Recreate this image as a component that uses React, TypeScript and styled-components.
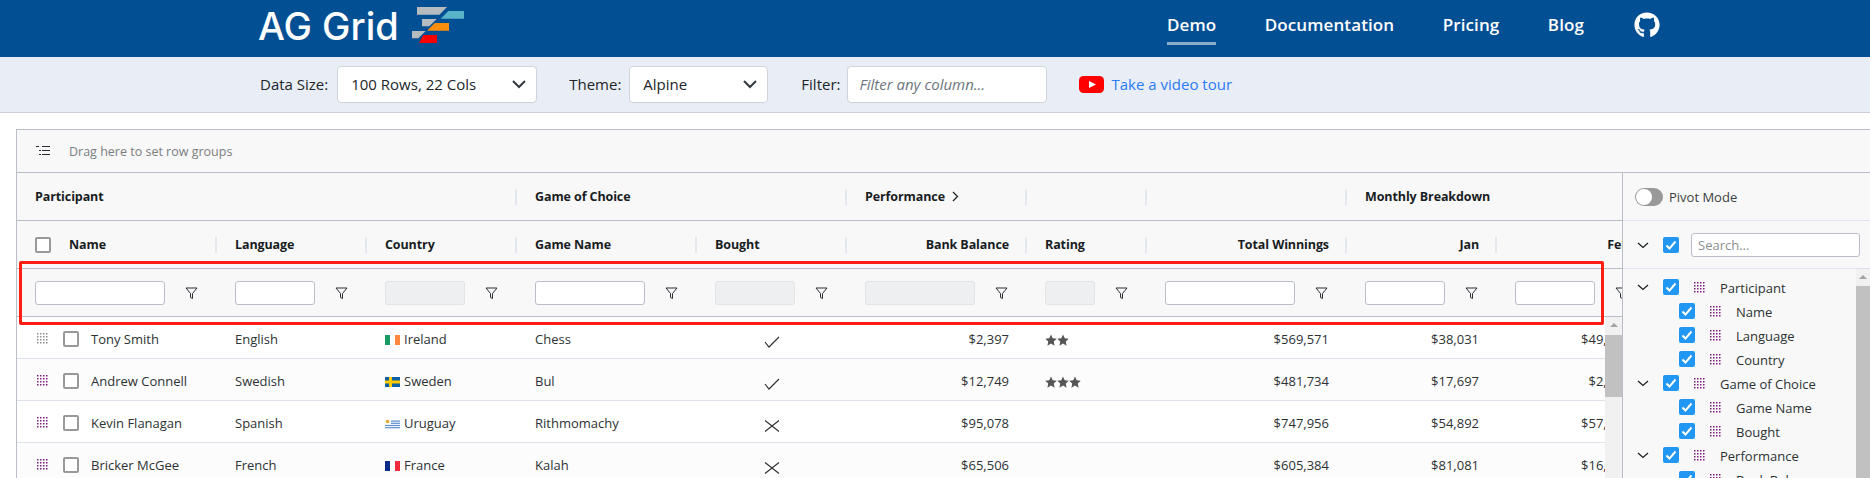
import React from 'react';
import styled, { createGlobalStyle } from 'styled-components';
import { FaGithub } from 'react-icons/fa';

const GlobalStyle = createGlobalStyle`
  html, body {
    margin: 0;
    padding: 0;
    background: #fff;
    overflow: hidden;
  }
  * { box-sizing: border-box; }
`;

const FONT = `"Open Sans", "Noto Sans", sans-serif`;

const Page = styled.div`
  position: relative;
  width: 1870px;
  height: 478px;
  overflow: hidden;
  font-family: ${FONT};
  color: #181d1f;
`;

const TopBar = styled.header`
  height: 57px;
  background: #034f94;
  display: flex;
  align-items: center;
  padding-left: 258px;
`;

const Brand = styled.div`
  width: 154px;
  margin-top: -6px;
  color: #fff;
  font-family: Inter, ${FONT};
  font-size: 38px;
  font-weight: 500;
  line-height: 50px;
  white-space: nowrap;
`;

const LogoMark = styled.svg`
  width: 52px;
  height: 36px;
  margin-top: -7px;
`;

const Nav = styled.nav`
  display: flex;
  align-items: center;
  align-self: flex-start;
  gap: 48.5px;
  margin: 8px 0 0 703px;
`;

const NavLink = styled.a<{ $active?: boolean }>`
  position: relative;
  color: #fff;
  font-size: 17px;
  font-weight: 600;
  line-height: 34px;
  letter-spacing: 0.1px;
  &::after {
    content: '';
    display: ${p => (p.$active ? 'block' : 'none')};
    position: absolute;
    left: 0;
    right: 0;
    bottom: -3px;
    height: 3px;
    background: #8aaccb;
  }
`;

const GithubLink = styled.a`
  display: flex;
  margin-left: 2px;
  color: #fff;
  font-size: 26px;
`;

const Toolbar = styled.div`
  height: 56px;
  background: #e9eef6;
  border-bottom: 1px solid #cdd2da;
  display: flex;
  align-items: center;
  padding: 0 0 1px 260px;
  font-size: 15px;
`;

const ToolLabel = styled.label<{ $gap: number }>`
  color: #212529;
  margin-right: ${p => p.$gap}px;
`;

const SelectBox = styled.div<{ $w: number; $gap: number }>`
  width: ${p => p.$w}px;
  height: 37px;
  margin-right: ${p => p.$gap}px;
  background: #fff;
  border: 1px solid #ced4da;
  border-radius: 4px;
  display: flex;
  align-items: center;
  justify-content: space-between;
  padding: 0 9px 0 13px;
  color: #212529;
`;

const FilterInput = styled.input`
  width: 200px;
  height: 37px;
  background: #fff;
  border: 1px solid #ced4da;
  border-radius: 4px;
  padding: 0 12px;
  font: italic 15px ${FONT};
  &::placeholder { color: #6c757d; opacity: 1; }
`;

const VideoLink = styled.a`
  display: flex;
  align-items: center;
  gap: 8px;
  margin-left: 32px;
  color: #2a7cf7;
`;

const GridWrap = styled.div`
  margin: 16px 0 0 16px;
  border-top: 1px solid #babfc7;
  border-left: 1px solid #babfc7;
  background: #f8f8f8;
`;

const GroupBar = styled.div`
  height: 43px;
  border-bottom: 1px solid #babfc7;
  display: flex;
  align-items: center;
  gap: 19px;
  padding-left: 19px;
  font-size: 12.5px;
  color: #7a7e80;
`;

const GridBody = styled.div`
  display: flex;
  height: 306px;
`;

const MainColumn = styled.div`
  width: 1605px;
  overflow: hidden;
  flex: none;
`;

const HeadRow = styled.div`
  height: 48px;
  width: 1800px;
  display: flex;
  align-items: center;
  border-bottom: 1px solid #babfc7;
  background: #f8f8f8;
`;

const HeadCell = styled.div<{ $w: number; $right?: boolean }>`
  position: relative;
  width: ${p => p.$w}px;
  flex: none;
  height: 100%;
  padding: 0 18px;
  display: flex;
  align-items: center;
  gap: 18px;
  justify-content: ${p => (p.$right ? 'flex-end' : 'flex-start')};
  font-size: 12.5px;
  font-weight: 700;
  letter-spacing: -0.1px;
  color: #181d1f;
  &::after {
    content: '';
    position: absolute;
    right: 0;
    top: 50%;
    width: 2px;
    height: 16px;
    margin-top: -8px;
    background: #e3e7ee;
  }
`;

const FilterCell = styled.div<{ $w: number }>`
  width: ${p => p.$w}px;
  flex: none;
  height: 100%;
  padding: 0 18px;
  display: flex;
  align-items: center;
  gap: 20px;
`;

const FloatInput = styled.input`
  flex: 1;
  min-width: 0;
  height: 24px;
  background: ${p => (p.disabled ? '#eeeff1' : '#fff')};
  border: 1px solid ${p => (p.disabled ? '#e2e4e8' : '#babfc7')};
  border-radius: 3px;
  padding: 0 8px;
`;

const RowsArea = styled.div`
  display: flex;
  height: 162px;
`;

const RowsClip = styled.div`
  flex: 1;
  overflow: hidden;
`;

const Row = styled.div<{ $even?: boolean }>`
  height: 42px;
  width: 1800px;
  padding-top: 2px;
  display: flex;
  align-items: center;
  background: ${p => (p.$even ? '#fcfcfc' : '#fff')};
  border-bottom: 1px solid #dde2eb;
  font-size: 13px;
  color: #2d3234;
`;

const Cell = styled.div<{ $w: number; $right?: boolean; $center?: boolean }>`
  width: ${p => p.$w}px;
  flex: none;
  padding: 0 18px;
  display: flex;
  align-items: center;
  white-space: nowrap;
  justify-content: ${p => (p.$right ? 'flex-end' : p.$center ? 'center' : 'flex-start')};
`;

const RowGrip = styled.span`
  display: flex;
  margin: 0 15px 0 2px;
`;

const CheckBox = styled.span<{ $checked?: boolean }>`
  width: 16px;
  height: 16px;
  flex: none;
  display: flex;
  align-items: center;
  justify-content: center;
  border-radius: 2px;
  background: ${p => (p.$checked ? '#2196f3' : '#fff')};
  border: ${p => (p.$checked ? 'none' : '2px solid #999')};
`;

const RowCheck = styled(CheckBox)`
  margin-right: 12px;
`;

const FlagWrap = styled.svg`
  width: 15px;
  height: 10px;
  margin: 2px 4px 0 0;
  flex: none;
`;

const Stars = styled.span`
  display: flex;
  margin-top: 2px;
`;

const BoughtIcon = styled.svg`
  width: 16px;
  height: 16px;
  margin-top: 6px;
  fill: none;
  stroke: #333;
  stroke-width: 1.2;
`;

const VScroll = styled.div`
  width: 17px;
  flex: none;
  background: #f1f1f1;
  display: flex;
  flex-direction: column;
  align-items: center;
`;

const ScrollArrow = styled.span`
  width: 0;
  height: 0;
  margin-top: 6px;
  border-left: 4px solid transparent;
  border-right: 4px solid transparent;
  border-bottom: 4px solid #a3a3a3;
`;

const ScrollThumb = styled.div<{ $top: number; $h: number }>`
  width: 100%;
  height: ${p => p.$h}px;
  margin-top: ${p => p.$top}px;
  background: #c1c1c1;
`;

const Panel = styled.aside`
  flex: 1;
  min-width: 0;
  border-left: 1px solid #babfc7;
  background: #f8f8f8;
  overflow: hidden;
`;

const PivotRow = styled.div`
  height: 48px;
  border-bottom: 1px solid #dde2eb;
  display: flex;
  align-items: center;
  padding-left: 12px;
  gap: 6px;
  font-size: 13px;
  color: #3a3f41;
`;

const Toggle = styled.span`
  width: 28px;
  height: 18px;
  border-radius: 9px;
  background: #999;
  display: flex;
  align-items: center;
  padding-left: 1px;
  &::before {
    content: '';
    width: 16px;
    height: 16px;
    border-radius: 50%;
    background: #fff;
  }
`;

const SearchRow = styled.div`
  height: 48px;
  border-bottom: 1px solid #dde2eb;
  display: flex;
  align-items: center;
  padding: 0 10px 0 12px;
  gap: 12px;
`;

const SearchInput = styled.input`
  flex: 1;
  min-width: 0;
  height: 24px;
  background: #fff;
  border: 1px solid #babfc7;
  border-radius: 3px;
  padding: 0 6px;
  font: 13px ${FONT};
  &::placeholder { color: #8b8f91; opacity: 1; }
`;

const ListArea = styled.div`
  display: flex;
  height: 210px;
`;

const ColumnList = styled.div`
  flex: 1;
  min-width: 0;
  padding-top: 6px;
  overflow: hidden;
`;

const ListScroll = styled(VScroll)`
  width: 14px;
`;

const ListRow = styled.div<{ $leaf?: boolean }>`
  height: 24px;
  display: flex;
  align-items: center;
  padding-left: ${p => (p.$leaf ? 56 : 12)}px;
  font-size: 13px;
  color: #2d3234;
  white-space: nowrap;
`;

const ListLabel = styled.span`
  margin-top: 2px;
`;

const Chevron = styled.svg<{ $tight?: boolean }>`
  width: 16px;
  height: 16px;
  flex: none;
  margin-right: ${p => (p.$tight ? 0 : 12)}px;
  fill: none;
  stroke: #181d1f;
  stroke-width: 1.2;
`;

const ListGrip = styled.span`
  display: flex;
  margin: 0 15px;
`;

const FunnelSvg = styled.svg`
  width: 14px;
  height: 16px;
  flex: none;
  fill: none;
  stroke: #2b2f35;
  stroke-width: 1;
`;

const MoreIcon = styled.svg`
  width: 8px;
  height: 11px;
  margin-left: -12px;
  fill: none;
  stroke: #181d1f;
  stroke-width: 1.2;
`;

const Highlight = styled.div`
  position: absolute;
  left: 19px;
  top: 261px;
  width: 1585px;
  height: 64px;
  border: 3px solid #ff1e14;
  border-radius: 2px;
  pointer-events: none;
`;

const Grip = ({ color = '#7d1f7d' }: { color?: string }) => (
  <svg width="11" height="11" viewBox="0 0 11 11">
    {[0, 1, 2, 3].map(x =>
      [0, 1, 2, 3].map(y => <rect key={`${x}${y}`} x={x * 3} y={y * 3} width="1.5" height="1.5" fill={color} />)
    )}
  </svg>
);

const Tick = () => (
  <svg width="12" height="12" viewBox="0 0 12 12" fill="none" stroke="#fff" strokeWidth="2">
    <path d="M1.5 6.5l3 3 6-7" />
  </svg>
);

const FunnelIcon = () => (
  <FunnelSvg viewBox="0 0 14 16">
    <path d="M1 3h11L7.5 8.5v5L5.5 12.5v-4z" />
  </FunnelSvg>
);

const DownChevron = ({ tight }: { tight?: boolean }) => (
  <Chevron viewBox="0 0 16 16" $tight={tight}>
    <path d="M3 6l5 4.5 5-4.5" />
  </Chevron>
);

const SelectChevron = () => (
  <svg width="16" height="16" viewBox="0 0 16 16" fill="none" stroke="#343a40" strokeWidth="2">
    <path d="M2 5l6 6 6-6" />
  </svg>
);

const Star = () => (
  <svg width="12" height="12" viewBox="0 0 24 24" fill="#555">
    <path d="M12 1l3.4 7.6 8.1.9-6 5.6 1.7 8.2-7.2-4.2-7.2 4.2 1.7-8.2-6-5.6 8.1-.9z" />
  </svg>
);

const Flag = ({ name }: { name: string }) => {
  if (name === 'Ireland')
    return (
      <FlagWrap viewBox="0 0 15 10">
        <rect width="5" height="10" fill="#169b62" />
        <rect x="5" width="5" height="10" fill="#fff" />
        <rect x="10" width="5" height="10" fill="#ff883e" />
      </FlagWrap>
    );
  if (name === 'Sweden')
    return (
      <FlagWrap viewBox="0 0 15 10">
        <rect width="15" height="10" fill="#0b5fa5" />
        <rect x="4" width="3" height="10" fill="#fecc00" />
        <rect y="3.5" width="15" height="3" fill="#fecc00" />
      </FlagWrap>
    );
  if (name === 'Uruguay')
    return (
      <FlagWrap viewBox="0 0 15 10">
        <rect width="15" height="10" fill="#fff" />
        {[1.5, 3.7, 5.9, 8.1].map(y => (
          <rect key={y} x={y < 4 ? 6 : 0} y={y} width={y < 4 ? 9 : 15} height="1.2" fill="#5f8fd0" />
        ))}
        <circle cx="2.5" cy="2.5" r="1.8" fill="#e0a92e" />
      </FlagWrap>
    );
  return (
    <FlagWrap viewBox="0 0 15 10">
      <rect width="5" height="10" fill="#0a2a8c" />
      <rect x="5" width="5" height="10" fill="#fff" />
      <rect x="10" width="5" height="10" fill="#ef2b3c" />
    </FlagWrap>
  );
};

const groups = [
  { w: 500, label: 'Participant' },
  { w: 330, label: 'Game of Choice' },
  { w: 180, label: 'Performance', more: true },
  { w: 120, label: '' },
  { w: 200, label: '' },
  { w: 470, label: 'Monthly Breakdown' },
];

const columns = [
  { w: 200, label: 'Name', on: true },
  { w: 150, label: 'Language', on: true },
  { w: 150, label: 'Country', on: false },
  { w: 180, label: 'Game Name', on: true },
  { w: 150, label: 'Bought', on: false },
  { w: 180, label: 'Bank Balance', on: false, right: true },
  { w: 120, label: 'Rating', on: false },
  { w: 200, label: 'Total Winnings', on: true, right: true },
  { w: 150, label: 'Jan', on: true, right: true },
  { w: 150, label: 'Feb', on: true, right: true },
];

const people = [
  { name: 'Tony Smith', lang: 'English', country: 'Ireland', game: 'Chess', bought: true, bank: '$2,397', stars: 2, total: '$569,571', jan: '$38,031', feb: '$49,125' },
  { name: 'Andrew Connell', lang: 'Swedish', country: 'Sweden', game: 'Bul', bought: true, bank: '$12,749', stars: 3, total: '$481,734', jan: '$17,697', feb: '$2,513' },
  { name: 'Kevin Flanagan', lang: 'Spanish', country: 'Uruguay', game: 'Rithmomachy', bought: false, bank: '$95,078', stars: 0, total: '$747,956', jan: '$54,892', feb: '$57,340' },
  { name: 'Bricker McGee', lang: 'French', country: 'France', game: 'Kalah', bought: false, bank: '$65,506', stars: 0, total: '$605,384', jan: '$81,081', feb: '$16,762' },
];

const panelRows = [
  { label: 'Participant' },
  { label: 'Name', leaf: true },
  { label: 'Language', leaf: true },
  { label: 'Country', leaf: true },
  { label: 'Game of Choice' },
  { label: 'Game Name', leaf: true },
  { label: 'Bought', leaf: true },
  { label: 'Performance' },
  { label: 'Bank Balance', leaf: true },
];

const App = () => {
  return (
    <Page>
      <GlobalStyle />
      <TopBar>
        <Brand>AG Grid</Brand>
        <LogoMark viewBox="412 7 52 36">
          <polygon points="417,7 447,7 439.5,14.7 417,14.7" fill="#b4bcc0" />
          <polygon points="448.3,11 464,11 464,18.7 440.7,18.7" fill="#58b4c8" />
          <polygon points="422,19 436.7,19 429.3,26.3 422,26.3" fill="#b4bcc0" />
          <polygon points="434.7,23 449,23 449,30.7 427,30.7" fill="#f98d0c" />
          <polygon points="412,31 425.7,31 418.3,38.3 412,38.3" fill="#b4bcc0" />
          <polygon points="423.3,35 437,35 437,43 419,43" fill="#f80000" />
        </LogoMark>
        <Nav>
          <NavLink $active>Demo</NavLink>
          <NavLink>Documentation</NavLink>
          <NavLink>Pricing</NavLink>
          <NavLink>Blog</NavLink>
          <GithubLink><FaGithub /></GithubLink>
        </Nav>
      </TopBar>

      <Toolbar>
        <ToolLabel $gap={9}>Data Size:</ToolLabel>
        <SelectBox $w={200} $gap={32}>100 Rows, 22 Cols<SelectChevron /></SelectBox>
        <ToolLabel $gap={8}>Theme:</ToolLabel>
        <SelectBox $w={139} $gap={33}>Alpine<SelectChevron /></SelectBox>
        <ToolLabel $gap={6}>Filter:</ToolLabel>
        <FilterInput placeholder="Filter any column..." />
        <VideoLink>
          <svg width="25" height="17" viewBox="0 0 25 17">
            <rect width="25" height="17" rx="4.5" fill="#f00" />
            <path d="M10 5l7 3.5-7 3.5z" fill="#fff" />
          </svg>
          Take a video tour
        </VideoLink>
      </Toolbar>

      <GridWrap>
        <GroupBar>
          <svg width="14" height="11" viewBox="0 0 14 11" fill="#2b2f35">
            <rect x="0" y="0" width="3" height="1" />
            <rect x="3" y="4" width="2" height="1" />
            <rect x="3" y="8" width="2" height="1" />
            {[0, 4, 8].map(y => <rect key={y} x="6" y={y} width="8" height="1" />)}
          </svg>
          Drag here to set row groups
        </GroupBar>
        <GridBody>
          <MainColumn>
            <HeadRow>
              {groups.map((g, i) => (
                <HeadCell key={i} $w={g.w}>
                  <span>{g.label}</span>
                  {g.more && (
                    <MoreIcon viewBox="0 0 8 11">
                      <path d="M2 1l4.5 4.5L2 10" />
                    </MoreIcon>
                  )}
                </HeadCell>
              ))}
            </HeadRow>
            <HeadRow>
              {columns.map((c, i) => (
                <HeadCell key={c.label} $w={c.w} $right={c.right}>
                  {i === 0 && <CheckBox />}
                  {c.label}
                </HeadCell>
              ))}
            </HeadRow>
            <HeadRow>
              {columns.map(c => (
                <FilterCell key={c.label} $w={c.w}>
                  <FloatInput disabled={!c.on} />
                  <FunnelIcon />
                </FilterCell>
              ))}
            </HeadRow>
            <RowsArea>
              <RowsClip>
                {people.map((p, i) => (
                  <Row key={p.name} $even={i % 2 === 1}>
                    <Cell $w={200}>
                      <RowGrip><Grip color={i === 0 ? '#8f8f8f' : '#7d1f7d'} /></RowGrip>
                      <RowCheck />
                      {p.name}
                    </Cell>
                    <Cell $w={150}>{p.lang}</Cell>
                    <Cell $w={150}><Flag name={p.country} />{p.country}</Cell>
                    <Cell $w={180}>{p.game}</Cell>
                    <Cell $w={150} $center>
                      <BoughtIcon viewBox="0 0 16 16">
                        <path d={p.bought ? 'M1 8l4 5L15 3' : 'M1 2.5L15 13.5M15 2.5L1 13.5'} />
                      </BoughtIcon>
                    </Cell>
                    <Cell $w={180} $right>{p.bank}</Cell>
                    <Cell $w={120}>
                      <Stars>{Array.from({ length: p.stars }).map((_, s) => <Star key={s} />)}</Stars>
                    </Cell>
                    <Cell $w={200} $right>{p.total}</Cell>
                    <Cell $w={150} $right>{p.jan}</Cell>
                    <Cell $w={150} $right>{p.feb}</Cell>
                  </Row>
                ))}
              </RowsClip>
              <VScroll>
                <ScrollArrow />
                <ScrollThumb $top={8} $h={62} />
              </VScroll>
            </RowsArea>
          </MainColumn>
          <Panel>
            <PivotRow><Toggle />Pivot Mode</PivotRow>
            <SearchRow>
              <DownChevron tight />
              <CheckBox $checked><Tick /></CheckBox>
              <SearchInput placeholder="Search..." />
            </SearchRow>
            <ListArea>
              <ColumnList>
                {panelRows.map(r => (
                  <ListRow key={r.label} $leaf={r.leaf}>
                    {!r.leaf && <DownChevron />}
                    <CheckBox $checked><Tick /></CheckBox>
                    <ListGrip><Grip /></ListGrip>
                    <ListLabel>{r.label}</ListLabel>
                  </ListRow>
                ))}
              </ColumnList>
              <ListScroll>
                <ScrollArrow />
                <ScrollThumb $top={7} $h={200} />
              </ListScroll>
            </ListArea>
          </Panel>
        </GridBody>
      </GridWrap>
      <Highlight />
    </Page>
  );
};

export default App;
